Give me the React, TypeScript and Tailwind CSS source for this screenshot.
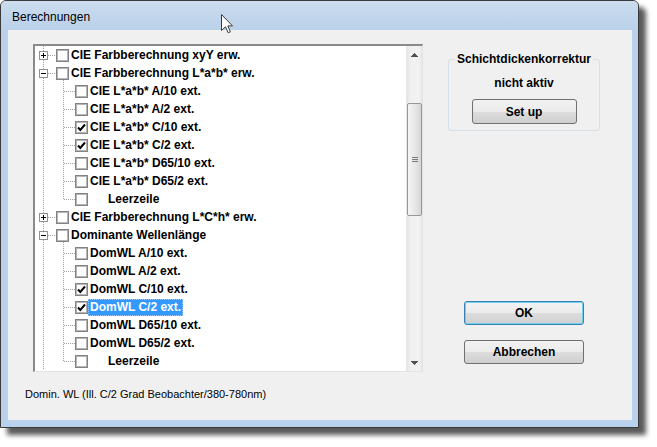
import React from "react";

type Row = {
  lvl: 0 | 1;
  label: string;
  exp?: "+" | "-";
  checked?: boolean;
  selected?: boolean;
  last?: boolean;
  indent?: boolean;
};

const rows: Row[] = [
  { lvl: 0, exp: "+", label: "CIE Farbberechnung xyY erw." },
  { lvl: 0, exp: "-", label: "CIE Farbberechnung L*a*b* erw." },
  { lvl: 1, label: "CIE L*a*b* A/10 ext." },
  { lvl: 1, label: "CIE L*a*b* A/2 ext." },
  { lvl: 1, label: "CIE L*a*b* C/10 ext.", checked: true },
  { lvl: 1, label: "CIE L*a*b* C/2 ext.", checked: true },
  { lvl: 1, label: "CIE L*a*b* D65/10 ext." },
  { lvl: 1, label: "CIE L*a*b* D65/2 ext." },
  { lvl: 1, label: "Leerzeile", last: true, indent: true },
  { lvl: 0, exp: "+", label: "CIE Farbberechnung L*C*h* erw." },
  { lvl: 0, exp: "-", label: "Dominante Wellenlänge" },
  { lvl: 1, label: "DomWL A/10 ext." },
  { lvl: 1, label: "DomWL A/2 ext." },
  { lvl: 1, label: "DomWL C/10 ext.", checked: true },
  { lvl: 1, label: "DomWL C/2 ext.", checked: true, selected: true },
  { lvl: 1, label: "DomWL D65/10 ext." },
  { lvl: 1, label: "DomWL D65/2 ext." },
  { lvl: 1, label: "Leerzeile", last: true, indent: true },
];

const DOT = "#a0a0a0";

function Lines({ row }: { row: Row }) {
  if (row.lvl === 0) {
    return (
      <svg width="21" height="18" className="shrink-0" style={{ overflow: "visible" }} shapeRendering="crispEdges">
        <line x1="8.5" y1="0" x2="8.5" y2="18" stroke={DOT} strokeDasharray="1 1" />
        <line x1="13" y1="9.5" x2="21" y2="9.5" stroke={DOT} strokeDasharray="1 1" />
        <rect x="4.5" y="5.5" width="8" height="8" fill="#ffffff" stroke="#919191" />
        <line x1="6" y1="9.5" x2="11" y2="9.5" stroke="#000000" />
        {row.exp === "+" && <line x1="8.5" y1="7" x2="8.5" y2="12" stroke="#000000" />}
        {row.exp === "-" && <line x1="28.5" y1="16" x2="28.5" y2="18" stroke={DOT} strokeDasharray="1 1" />}
      </svg>
    );
  }
  return (
    <svg width="40" height="18" className="shrink-0" shapeRendering="crispEdges">
      <line x1="8.5" y1="0" x2="8.5" y2="18" stroke={DOT} strokeDasharray="1 1" />
      <line x1="28.5" y1="0" x2="28.5" y2={row.last ? 10 : 18} stroke={DOT} strokeDasharray="1 1" />
      <line x1="29" y1="9.5" x2="40" y2="9.5" stroke={DOT} strokeDasharray="1 1" />
    </svg>
  );
}

function CheckBox({ checked }: { checked?: boolean }) {
  return (
    <span className="w-[13px] h-[13px] mt-[1px] shrink-0 border border-[#838383] bg-white shadow-[inset_0_0_0_1px_#b4b4b4] flex items-center justify-center">
      {checked && (
        <svg width="11" height="11" viewBox="0 0 11 11">
          <path d="M2 5.5 L4.3 8 L9 2.5" fill="none" stroke="#000000" strokeWidth="2" />
        </svg>
      )}
    </span>
  );
}

function TreeRow({ row }: { row: Row }) {
  return (
    <div className="h-[18px] flex items-center">
      <Lines row={row} />
      <CheckBox checked={row.checked} />
      <span
        className={
          row.selected
            ? "px-[1px] h-[17px] leading-[15px] text-[12px] font-bold whitespace-nowrap bg-[#3399ff] text-white border border-dotted border-[#9cc8f5]"
            : row.indent
            ? "pl-[20px] pr-[2px] text-[12px] leading-[17px] font-bold whitespace-nowrap text-black"
            : "px-[2px] text-[12px] leading-[17px] font-bold whitespace-nowrap text-black"
        }
      >
        {row.label}
      </span>
    </div>
  );
}

function Arrow({ up }: { up?: boolean }) {
  return (
    <svg width="7" height="4" viewBox="0 0 7 4" shapeRendering="crispEdges">
      {up ? <path d="M3.5 0 L7 4 L0 4 Z" fill="#505050" /> : <path d="M0 0 L7 0 L3.5 4 Z" fill="#505050" />}
    </svg>
  );
}

function Scrollbar() {
  return (
    <div className="w-[16px] shrink-0 flex flex-col bg-[linear-gradient(to_right,#e3e3e3,#f0f0f0_20%,#f2f2f2_80%,#e6e6e6)] border-l border-[#e9e9e9]">
      <div className="h-[17px] flex items-center justify-center">
        <Arrow up />
      </div>
      <div className="h-[40px]" />
      <div className="h-[113px] rounded-[2px] border border-[#979797] bg-[linear-gradient(to_right,#f4f4f4,#e8e8e8_50%,#d6d6d6)] flex items-center justify-center">
        <svg width="6" height="6" shapeRendering="crispEdges">
          <line x1="0" y1="0.5" x2="6" y2="0.5" stroke="#7a7a7a" />
          <line x1="0" y1="2.5" x2="6" y2="2.5" stroke="#7a7a7a" />
          <line x1="0" y1="4.5" x2="6" y2="4.5" stroke="#7a7a7a" />
        </svg>
      </div>
      <div className="flex-1" />
      <div className="h-[17px] flex items-center justify-center">
        <Arrow />
      </div>
    </div>
  );
}

const btn =
  "rounded-[3px] border text-[12px] font-bold text-black flex items-center justify-center bg-[linear-gradient(to_bottom,#f2f2f2_0%,#ebebeb_50%,#dddddd_51%,#cfcfcf_100%)]";

export default function App() {
  return (
    <div className="w-[657px] h-[447px] bg-white relative font-['Liberation_Sans',Arial,sans-serif] text-black">
      <div className="w-[639px] h-[428px] border border-[#3a3a3a] rounded-t-[6px] bg-[#b9d1ea] shadow-[7px_7px_5px_rgba(0,0,0,0.65)] flex flex-col overflow-hidden">
        <div className="h-[29px] shrink-0 bg-[linear-gradient(to_bottom,#cbdcee,#bad1ea)] flex items-center pl-[11px] pt-[3px]">
          <span className="text-[12px] text-black">Berechnungen</span>
        </div>
        <div className="flex-1 ml-[7px] mr-[6px] mb-[7px] bg-[#f0f0f0] flex flex-col">
          <div className="flex pl-[25px] pt-[14px]">
            <div className="w-[390px] h-[328px] flex bg-white border-t-2 border-l-2 border-r border-b border-t-[#8a8a8a] border-l-[#8a8a8a] border-r-[#e3e3e3] border-b-[#e3e3e3]">
              <div className="flex-1 overflow-hidden">
                {rows.map((r, i) => (
                  <TreeRow key={i} row={r} />
                ))}
              </div>
              <Scrollbar />
            </div>
            <div className="ml-[25px] w-[152px] flex flex-col items-center pt-[15px]">
              <div className="w-[152px] h-[72px] rounded-[3px] border border-[#d5dfe5] flex flex-col items-center">
                <span className="-mt-[8px] px-[2px] bg-[#f0f0f0] text-[12px] leading-[14px] font-bold">
                  Schichtdickenkorrektur
                </span>
                <span className="mt-[10px] text-[12px] leading-[14px] font-bold">nicht aktiv</span>
                <button className={btn + " mt-[9px] w-[105px] h-[25px] border-[#707070]"}>Set up</button>
              </div>
              <button className={btn + " mt-[170px] w-[120px] h-[24px] border-[#3c7fb1] shadow-[inset_0_0_0_1px_#6fd0f0]"}>
                OK
              </button>
              <button className={btn + " mt-[15px] w-[120px] h-[24px] border-[#707070]"}>Abbrechen</button>
            </div>
          </div>
          <div className="pl-[17px] mt-[16px] text-[11px] leading-[13px] text-black">
            Domin. WL (Ill. C/2 Grad Beobachter/380-780nm)
          </div>
        </div>
      </div>
      <svg className="absolute left-[221px] top-[14px]" width="13" height="20" viewBox="0 0 13 20">
        <path d="M0.5 0.5 L0.5 16.5 L4.5 12.8 L7.2 18.8 L9.4 17.8 L6.8 11.9 L11.5 11.9 Z" fill="#ffffff" stroke="#3a3a3a" strokeWidth="1" />
      </svg>
    </div>
  );
}
